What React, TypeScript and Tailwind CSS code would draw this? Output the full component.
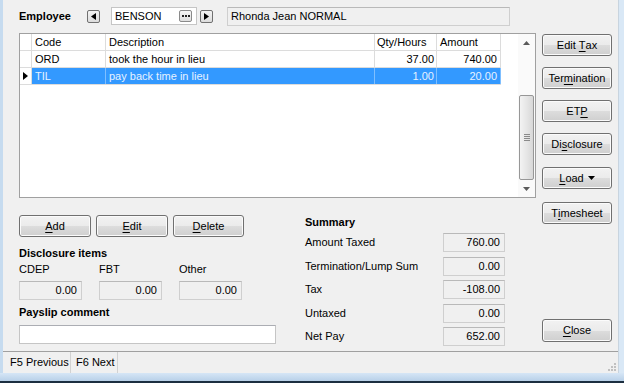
import React from 'react';

const btnSkin =
  'rounded-[3px] border border-[#707070] bg-[linear-gradient(#f2f2f2,#ebebeb_50%,#dddddd_50%,#cfcfcf)] shadow-[inset_0_0_0_1px_#fbfbfb]';

const U: React.FC<{ c: string }> = ({ c }) => (
  <span className="underline underline-offset-[2px] decoration-[1px]">{c}</span>
);

const WinButton: React.FC<{ children: React.ReactNode; className?: string }> = ({
  children,
  className = '',
}) => (
  <button
    type="button"
    className={`flex items-center justify-center text-[11px] leading-none text-black ${btnSkin} ${className}`}
  >
    {children}
  </button>
);

const ArrowButton: React.FC<{ dir: 'left' | 'right'; className?: string }> = ({ dir, className = '' }) => (
  <button
    type="button"
    className={`flex h-[13px] w-[13px] items-center justify-center rounded-[2px] border border-[#707070] bg-[linear-gradient(#f4f4f4,#dcdcdc)] ${className}`}
  >
    <svg width="5" height="7" viewBox="0 0 5 7">
      {dir === 'left' ? <polygon points="5,0 5,7 0,3.5" fill="#000" /> : <polygon points="0,0 0,7 5,3.5" fill="#000" />}
    </svg>
  </button>
);

const ReadField: React.FC<{ value?: string; className?: string }> = ({ value, className = '' }) => (
  <div
    className={`flex h-[19px] items-center justify-end border border-[#cfcfcf] border-t-[#b9b9b9] bg-[#f0f0f0] pr-[4px] text-[11px] ${className}`}
  >
    {value}
  </div>
);

const cols = [
  { w: 'w-[74px]', key: 'code' },
  { w: 'w-[269px]', key: 'desc' },
  { w: 'w-[62px]', key: 'qty' },
  { w: 'w-[64px]', key: 'amount' },
];

const lines = [
  { code: 'ORD', desc: 'took the hour in lieu', qty: '37.00', amount: '740.00', selected: false },
  { code: 'TIL', desc: 'pay back time in lieu', qty: '1.00', amount: '20.00', selected: true },
];

const PayGrid: React.FC = () => (
  <div className="flex h-[165px] w-[517px] border border-[#a0a0a0] bg-white">
    <div className="flex w-[481px] flex-col">
      <div className="flex h-[17px] items-center border-b border-[#dcdcdc] leading-[16px]">
        <div className="h-full w-[12px] border-r border-[#dcdcdc]" />
        <div className={`${cols[0].w} h-full border-r border-[#dcdcdc] pl-[3px]`}>Code</div>
        <div className={`${cols[1].w} h-full border-r border-[#dcdcdc] pl-[3px]`}>Description</div>
        <div className={`${cols[2].w} h-full border-r border-[#dcdcdc] pl-[2px]`}>Qty/Hours</div>
        <div className={`${cols[3].w} h-full border-r border-[#dcdcdc] pl-[3px]`}>Amount</div>
      </div>
      {lines.map((l) => (
        <div
          key={l.code}
          className={`flex h-[17px] items-center border-b leading-[16px] ${
            l.selected ? 'border-[#dcdcdc] text-[#e6f2ff]' : 'border-[#dcdcdc]'
          }`}
        >
          <div className="flex h-full w-[12px] items-center justify-center border-r border-[#dcdcdc] bg-white">
            {l.selected && (
              <svg width="5" height="8" viewBox="0 0 5 8">
                <polygon points="0,0 0,8 5,4" fill="#000" />
              </svg>
            )}
          </div>
          <div
            className={`flex h-full ${l.selected ? 'bg-[#3399ff]' : ''}`}
          >
            <div className={`${cols[0].w} h-full border-r ${l.selected ? 'border-[#7fbfff]' : 'border-[#dcdcdc]'} pl-[3px]`}>
              {l.code}
            </div>
            <div className={`${cols[1].w} h-full border-r ${l.selected ? 'border-[#7fbfff]' : 'border-[#dcdcdc]'} pl-[3px]`}>
              {l.desc}
            </div>
            <div className={`${cols[2].w} h-full border-r ${l.selected ? 'border-[#7fbfff]' : 'border-[#dcdcdc]'} pr-[2px] text-right`}>
              {l.qty}
            </div>
            <div className={`${cols[3].w} h-full border-r ${l.selected ? 'border-[#7fbfff]' : 'border-[#dcdcdc]'} pr-[3px] text-right`}>
              {l.amount}
            </div>
          </div>
        </div>
      ))}
    </div>
    <div className="w-[17px]" />
    {/* vertical scrollbar */}
    <div className="flex w-[17px] flex-col bg-[#fafafa]">
      <div className="flex h-[17px] items-center justify-center">
        <svg width="7" height="4" viewBox="0 0 7 4">
          <polygon points="0,4 7,4 3.5,0" fill="#5a5a5a" />
        </svg>
      </div>
      <div className="flex flex-1 flex-col justify-end px-[1px]">
        <div className="flex h-[85px] items-center justify-center rounded-[2px] border border-[#979797] bg-[linear-gradient(90deg,#f3f3f3,#e6e6e6_50%,#d8d8d8)]">
          <div className="flex flex-col gap-[1px]">
            <div className="h-[1px] w-[6px] bg-[#8a8a8a]" />
            <div className="h-[1px] w-[6px] bg-[#8a8a8a]" />
            <div className="h-[1px] w-[6px] bg-[#8a8a8a]" />
            <div className="h-[1px] w-[6px] bg-[#8a8a8a]" />
          </div>
        </div>
      </div>
      <div className="flex h-[17px] items-center justify-center">
        <svg width="7" height="4" viewBox="0 0 7 4">
          <polygon points="0,0 7,0 3.5,4" fill="#5a5a5a" />
        </svg>
      </div>
    </div>
  </div>
);

const summary = [
  { label: 'Amount Taxed', value: '760.00' },
  { label: 'Termination/Lump Sum', value: '0.00' },
  { label: 'Tax', value: '-108.00' },
  { label: 'Untaxed', value: '0.00' },
  { label: 'Net Pay', value: '652.00' },
];

const disclosure = [
  { label: 'CDEP', value: '0.00' },
  { label: 'FBT', value: '0.00' },
  { label: 'Other', value: '0.00' },
];

export default function App() {
  return (
    <div className="flex h-[383px] w-[624px] flex-col bg-[#f0f0f0] font-['Liberation_Sans',Arial,sans-serif] text-[11px] text-black">
      <div className="flex h-[373px]">
        <div className="w-[3px] bg-[#c6dbef]" />
        <div className="flex w-[615px] flex-col">
          {/* main dialog body */}
          <div className="flex h-[351px] flex-col pl-[16px]">
            <div className="mt-[7px] flex h-[18px] items-center">
              <span className="w-[68px] font-bold">Employee</span>
              <ArrowButton dir="left" />
              <div className="ml-[11px] flex h-[18px] w-[86px] items-center border border-[#c5c5c5] bg-white pl-[3px] pr-[4px]">
                <span>BENSON</span>
                <button
                  type="button"
                  className="ml-auto flex h-[12px] w-[13px] items-center justify-center gap-[1px] rounded-[2px] border border-[#8a8a8a] bg-[linear-gradient(#f6f6f6,#dedede)]"
                >
                  <span className="h-[2px] w-[2px] bg-[#222]" />
                  <span className="h-[2px] w-[2px] bg-[#222]" />
                  <span className="h-[2px] w-[2px] bg-[#222]" />
                </button>
              </div>
              <ArrowButton dir="right" className="ml-[3px]" />
              <div className="ml-[14px] flex h-[19px] w-[283px] items-center border border-[#cfcfcf] border-t-[#b9b9b9] bg-[#f0f0f0] pl-[3px]">
                Rhonda Jean NORMAL
              </div>
            </div>

            <div className="mt-[8px] flex">
              <div className="flex w-[517px] flex-col">
                <PayGrid />

                <div className="mt-[17px] flex">
                  <div className="flex w-[257px] flex-col">
                    <div className="flex gap-[5px]">
                      <WinButton className="h-[22px] w-[72px]">
                        <U c="A" />dd
                      </WinButton>
                      <WinButton className="h-[22px] w-[72px]">
                        <U c="E" />dit
                      </WinButton>
                      <WinButton className="h-[22px] w-[71px]">
                        <U c="D" />elete
                      </WinButton>
                    </div>
                    <div className="mt-[10px] font-bold leading-[13px]">Disclosure items</div>
                    <div className="mt-[3px] grid grid-cols-[80px_80px_80px] leading-[13px]">
                      {disclosure.map((d) => (
                        <span key={d.label}>{d.label}</span>
                      ))}
                    </div>
                    <div className="mt-[5px] grid grid-cols-[80px_80px_80px]">
                      {disclosure.map((d) => (
                        <ReadField key={d.label} value={d.value} className="w-[63px]" />
                      ))}
                    </div>
                    <div className="mt-[6px] font-bold leading-[13px]">Payslip comment</div>
                    <div className="mt-[6px] h-[19px] w-[257px] border border-[#c5c5c5] border-t-[#abadb3] bg-white" />
                  </div>

                  <div className="ml-[29px] flex flex-col">
                    <div className="mt-[1px] font-bold leading-[13px]">Summary</div>
                    <div className="mt-[4px] flex flex-col gap-[4.5px]">
                      {summary.map((s) => (
                        <div key={s.label} className="flex items-center">
                          <span className="w-[138px]">{s.label}</span>
                          <ReadField value={s.value} className="w-[62px]" />
                        </div>
                      ))}
                    </div>
                  </div>
                </div>
              </div>

              {/* right-hand buttons */}
              <div className="ml-[6px] flex w-[70px] flex-col pt-[1px]">
                <WinButton className="h-[22px] w-[70px]">
                  Edit&nbsp;<U c="T" />ax
                </WinButton>
                <WinButton className="mt-[11px] h-[22px] w-[70px]">
                  Ter<U c="m" />ination
                </WinButton>
                <WinButton className="mt-[11px] h-[22px] w-[70px]">
                  ET<U c="P" />
                </WinButton>
                <WinButton className="mt-[11px] h-[22px] w-[70px]">
                  Di<U c="s" />closure
                </WinButton>
                <WinButton className="mt-[12px] h-[22px] w-[70px]">
                  <U c="L" />oad
                  <svg className="ml-[4px]" width="7" height="4" viewBox="0 0 7 4">
                    <polygon points="0,0 7,0 3.5,4" fill="#000" />
                  </svg>
                </WinButton>
                <WinButton className="mt-[13px] h-[22px] w-[70px]">
                  T<U c="i" />mesheet
                </WinButton>
                <WinButton className="mt-[95px] h-[23px] w-[70px]">
                  <U c="C" />lose
                </WinButton>
              </div>
            </div>
          </div>

          {/* status bar */}
          <div className="flex h-[22px] items-center border-t border-[#a0a0a0] leading-[21px]">
            <div className="h-full w-[68px] border-r border-[#d2d2d2] pl-[7px]">F5 Previous</div>
            <div className="h-full w-[47px] border-r border-[#d2d2d2] pl-[5px]">F6 Next</div>
            <div className="flex-1" />
            <svg className="mb-[-8px] mr-[1px]" width="10" height="10" viewBox="0 0 10 10">
              <rect x="7" y="1" width="2" height="2" fill="#c0c0c0" />
              <rect x="4" y="4" width="2" height="2" fill="#c0c0c0" />
              <rect x="7" y="4" width="2" height="2" fill="#c0c0c0" />
              <rect x="1" y="7" width="2" height="2" fill="#c0c0c0" />
              <rect x="4" y="7" width="2" height="2" fill="#c0c0c0" />
              <rect x="7" y="7" width="2" height="2" fill="#c0c0c0" />
            </svg>
          </div>
        </div>
        <div className="w-[6px] border-l border-[#c8d4df] bg-[#d9e8f6]" />
      </div>
      <div className="h-[10px] border-b-[2px] border-[#1c2e40] bg-[linear-gradient(#d6e6f6,#b8d0e8)]" />
    </div>
  );
}
